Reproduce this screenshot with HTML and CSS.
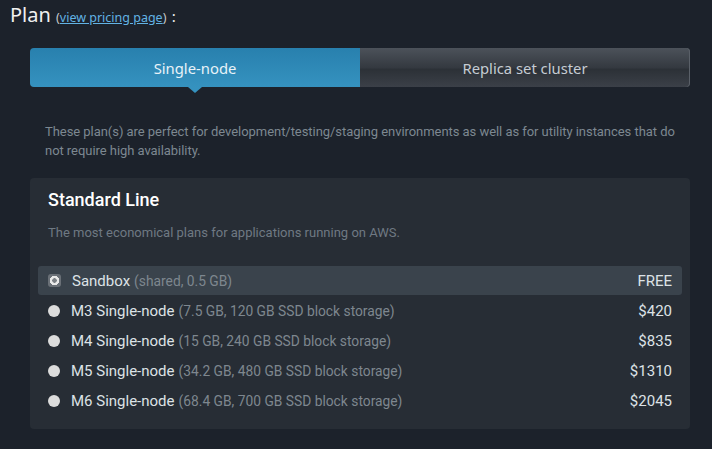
FILE: index.html
```html
<!DOCTYPE html>
<html lang="en">
<head>
    <meta charset="UTF-8">
    <title>Plan</title>
    <link rel="stylesheet" href="styles.css">
</head>
<body>
    <div class="plan-header">
        Plan <span class="plan-link">(<a href="#">view pricing page</a>)</span> <span class="colon">:</span>
    </div>

    <div class="plan-body">
        <div class="tabs">
            <div class="tab active">Single-node</div>
            <div class="tab">Replica set cluster</div>
        </div>

        <p class="tab-desc">These plan(s) are perfect for development/testing/staging environments as well as for utility instances that do not require high availability.</p>

        <div class="line-card">
            <h2>Standard Line</h2>
            <p class="line-desc">The most economical plans for applications running on AWS.</p>

            <div class="plan-list">
                <div class="plan-row selected">
                    <span class="radio"></span>
                    <span class="plan-name">Sandbox</span>
                    <span class="plan-info">(shared, 0.5 GB)</span>
                    <span class="plan-price">FREE</span>
                </div>
                <div class="plan-row">
                    <span class="radio"></span>
                    <span class="plan-name">M3 Single-node</span>
                    <span class="plan-info">(7.5 GB, 120 GB SSD block storage)</span>
                    <span class="plan-price">$420</span>
                </div>
                <div class="plan-row">
                    <span class="radio"></span>
                    <span class="plan-name">M4 Single-node</span>
                    <span class="plan-info">(15 GB, 240 GB SSD block storage)</span>
                    <span class="plan-price">$835</span>
                </div>
                <div class="plan-row">
                    <span class="radio"></span>
                    <span class="plan-name">M5 Single-node</span>
                    <span class="plan-info">(34.2 GB, 480 GB SSD block storage)</span>
                    <span class="plan-price">$1310</span>
                </div>
                <div class="plan-row">
                    <span class="radio"></span>
                    <span class="plan-name">M6 Single-node</span>
                    <span class="plan-info">(68.4 GB, 700 GB SSD block storage)</span>
                    <span class="plan-price">$2045</span>
                </div>
            </div>
        </div>
    </div>
</body>
</html>
```

FILE: styles.css
```css
* {
    margin: 0;
    padding: 0;
    box-sizing: border-box;
}

body {
    background-color: #1c222b;
    font-family: 'Roboto', sans-serif;
    color: #e6e6e6;
    padding: 2px 0 0 10px;
}

/* Заголовок */
.plan-header {
    font-family: 'Noto Sans', sans-serif;
    font-size: 20px;
    line-height: 26px;
    color: #f0f0f0;
}

.plan-link {
    font-size: 12.5px;
    color: #c8c8c8;
}

.plan-link a {
    color: #62b3e4;
    text-decoration: underline;
}

.colon {
    font-size: 15px;
}

.plan-body {
    padding: 17px 22px 0 20px;
}

/* Вкладки */
.tabs {
    display: flex;
    height: 39px;
    font-family: 'Noto Sans', sans-serif;
    font-size: 14.8px;
}

.tab {
    flex: 1;
    display: flex;
    align-items: center;
    justify-content: center;
    color: #c5ccd3;
    background: linear-gradient(#4c525a, #343940 50%, #2c3137 55%, #3b4048);
    border-radius: 0 4px 4px 0;
    box-shadow: inset -1px 0 0 #5a6068;
}

.tab.active {
    position: relative;
    color: #e8f2f8;
    background: linear-gradient(#2880ae, #3592bf);
    border-radius: 4px 0 0 4px;
    box-shadow: none;
}

.tab.active::after {
    content: "";
    position: absolute;
    left: 50%;
    bottom: -6px;
    margin-left: -7px;
    border-left: 7px solid transparent;
    border-right: 7px solid transparent;
    border-top: 6px solid #3592bf;
}

.tab-desc {
    font-family: 'Roboto', sans-serif;
    font-size: 13px;
    letter-spacing: -0.05px;
    line-height: 19px;
    color: #7d8891;
    padding: 35px 15px 0 15px;
    margin-bottom: 18px;
}

/* Карточка */
.line-card {
    background-color: #272d35;
    border-radius: 4px;
    padding: 11px 8px 13px 8px;
}

.line-card h2 {
    font-size: 18px;
    font-weight: 500;
    color: #ffffff;
    padding-left: 10px;
    line-height: 22px;
}

.line-desc {
    font-size: 13px;
    color: #6f7983;
    padding-left: 10px;
    margin-top: 13px;
    line-height: 18px;
}

.plan-list {
    margin-top: 24px;
}

.plan-row {
    display: flex;
    align-items: center;
    height: 30px;
    padding: 0 10px 0 10px;
    border-radius: 3px;
    font-size: 15px;
}

.plan-row.selected {
    background-color: #3a434c;
    height: 29px;
    margin-bottom: 1px;
}

.radio {
    width: 12px;
    height: 12px;
    border-radius: 50%;
    background-color: #dcdcdc;
    margin-right: 11px;
    flex-shrink: 0;
}

.selected .radio {
    width: 13px;
    height: 13px;
    border-radius: 3px;
    background: radial-gradient(circle, #7a7f84 0 2px, #e8e8e8 2.5px 4.5px, #6a7077 5px);
}

.plan-name {
    color: #dde2e6;
}

.plan-info {
    color: #7e878f;
    font-size: 13.8px;
    margin-left: 4px;
}

.plan-price {
    margin-left: auto;
    color: #dde2e6;
}
```
